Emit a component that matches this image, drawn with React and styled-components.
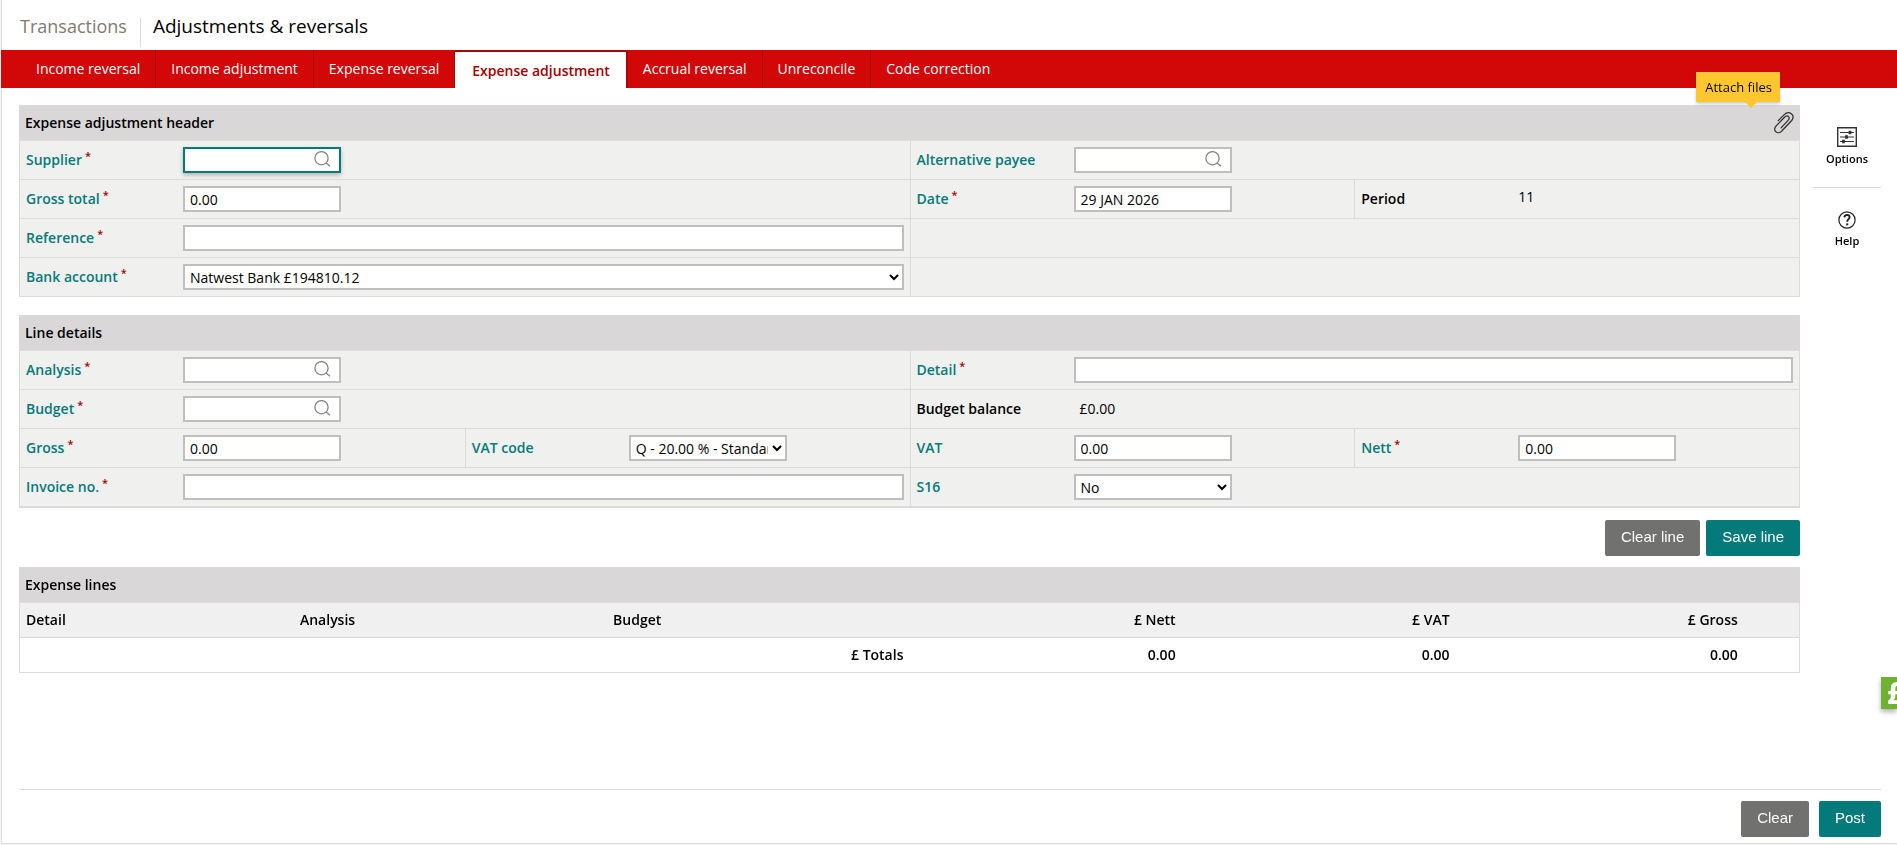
import React, { useId } from "react";
import styled, { createGlobalStyle, css } from "styled-components";

const color = {
  red: "#d20808",
  darkRed: "#a90606",
  teal: "#057a7b",
  grey: "#71716f",
  bar: "#d9d7d8",
  row: "#f0f0ee",
  line: "#dbdbdb",
  field: "#bfbfbf",
};

const GlobalStyle = createGlobalStyle`
  *, *::before, *::after { box-sizing: border-box; }
  body {
    margin: 0;
    background: #f7f7f7;
    color: #000;
    font: 14px/20px "Open Sans", "Noto Sans", sans-serif;
  }
  button, input, select { font: inherit; color: inherit; }
`;

const Page = styled.div`
  display: flex;
  flex-direction: column;
  min-height: calc(100vh - 1px);
  margin-left: 1px;
  background: #fff;
  border-left: 1px solid ${color.line};
  border-bottom: 1px solid ${color.line};
`;

const TitleBar = styled.header`
  display: flex;
  align-items: flex-end;
  height: 50px;
  padding: 0 18px 3px;
`;

const Section = styled.span`
  height: 29px;
  padding-right: 13px;
  border-right: 1px solid ${color.line};
  color: #85796f;
  font-size: 18px;
  line-height: 16px;
`;

const Title = styled.h1`
  height: 29px;
  margin: 0;
  padding-left: 12px;
  font-size: 19px;
  font-weight: 400;
  line-height: 16px;
`;

const TabBar = styled.nav`
  display: flex;
  height: 38px;
  margin-left: -1px;
  padding-left: 20px;
  background: ${color.red};
`;

const Tab = styled.a`
  padding: 0 15px;
  border-right: 1px solid ${color.darkRed};
  color: #fff;
  line-height: 37px;
  text-decoration: none;
  white-space: nowrap;

  &:last-child { border-right: 0; }

  ${(p) =>
    p.$active &&
    css`
      padding: 0 17px;
      border-top: 2px solid ${color.darkRed};
      background: #fff;
      color: #a30000;
      font-weight: 600;
      box-shadow: inset -1px 0 0 ${color.darkRed};
    `}
`;

const Body = styled.div`
  display: grid;
  grid-template-columns: minmax(0, 1fr) 68px;
  gap: 13px;
  flex: 1;
  padding: 17px 16px 0 17px;
`;

const Main = styled.main`
  display: flex;
  flex-direction: column;
`;

const Panel = styled.section`
  margin-bottom: ${(p) => p.$after || 0}px;
  border-bottom: ${(p) => (p.$ruled ? 1 : 0)}px solid ${color.line};
`;

const PanelBar = styled.div`
  display: flex;
  align-items: center;
  justify-content: space-between;
  height: 36px;
  padding: 0 6px;
  background: ${color.bar};
  border-bottom: 1px solid #dedcdc;
`;

const PanelTitle = styled.h2`
  margin: 0;
  font-size: 14px;
  font-weight: 600;
`;

const Row = styled.div`
  display: grid;
  grid-template-columns: repeat(4, minmax(0, 1fr));
  height: 39px;
  background: ${color.row};
  border: solid ${color.line};
  border-width: 0 1px 1px;
`;

const Cell = styled.div`
  grid-column: span ${(p) => p.$span || 1};
  display: flex;
  align-items: center;
  padding: 0 6px;

  & + & { border-left: 1px solid ${color.line}; }
`;

const Label = styled.label`
  flex: 0 0 157px;
  color: ${(p) => (p.$plain ? "#000" : color.teal)};
  font-weight: 600;
  white-space: nowrap;
`;

const Required = styled.span`
  margin-left: 3px;
  color: #a90000;
  font-size: 11px;
  vertical-align: 5px;
  line-height: 10px;
`;

const fieldBox = css`
  flex: ${(p) => (p.$wide ? "1 1 0" : "0 0 158px")};
  width: ${(p) => (p.$wide ? "auto" : "158px")};
  min-width: 0;
  height: 26px;
  background: #fff;
  border: 2px solid ${color.field};
  border-radius: 0;
`;

const Input = styled.input`
  ${fieldBox}
  padding: 0 5px;
  outline: none;
`;

const Select = styled.select`
  ${fieldBox}
  padding: 0 1px;
`;

const SearchBox = styled.div`
  ${fieldBox}
  display: flex;
  align-items: center;

  &:focus-within {
    border-color: ${color.teal};
    box-shadow: 0 2px 4px rgba(0, 0, 0, 0.25);
  }
`;

const SearchInput = styled.input`
  flex: 1;
  min-width: 0;
  height: 22px;
  padding: 0 5px;
  border: 0;
  outline: none;
  background: none;
`;

const IconButton = styled.button`
  display: flex;
  padding: 0;
  border: 0;
  background: none;
`;

const SearchButton = styled(IconButton)`
  padding: 0 8px 3px 0;
`;

const Value = styled.output`
  padding-left: ${(p) => (p.$indent ? 6 : 0)}px;
  padding-bottom: ${(p) => (p.$raised ? 4 : 0)}px;
`;

const AttachSlot = styled.div`
  position: relative;
`;

const Tooltip = styled.div`
  position: absolute;
  right: 14px;
  bottom: 32px;
  padding: 0 8px 0 9px;
  background: #ffc72f;
  box-shadow: 0 2px 3px rgba(0, 0, 0, 0.2);
  font-size: 13px;
  line-height: 30px;
  white-space: nowrap;

  &::after {
    content: "";
    position: absolute;
    top: 100%;
    right: 23px;
    border: 6px solid transparent;
    border-top-color: #ffc72f;
    border-bottom: 0;
  }
`;

const Buttons = styled.div`
  display: flex;
  justify-content: flex-end;
  gap: ${(p) => p.$gap}px;
  margin-bottom: ${(p) => p.$after || 0}px;
`;

const Button = styled.button`
  height: 36px;
  padding: 0 16px 2px;
  border: 0;
  border-radius: 2px;
  background: ${(p) => (p.$primary ? color.teal : color.grey)};
  color: #fff;
  font-family: "Liberation Sans", Arial, sans-serif;
  font-size: 15px;
`;

const Table = styled.table`
  width: 100%;
  table-layout: fixed;
  border-collapse: separate;
  border-spacing: 0;
  border: solid ${color.line};
  border-width: 0 1px;
`;

const Col = styled.col`
  width: ${(p) => p.$w}%;
`;

const Th = styled.th`
  height: 35px;
  padding: 0 6px;
  border-bottom: 1px solid ${color.line};
  background: ${(p) => (p.$total ? "#fff" : "#f0f0f0")};
  font-weight: 600;
  text-align: ${(p) => (p.$right ? "right" : "left")};
`;

const Rail = styled.aside`
  display: flex;
  flex-direction: column;
`;

const RailButton = styled.button`
  display: flex;
  flex-direction: column;
  align-items: center;
  padding: 22px 0 16px;
  border: 0;
  background: none;
  font-size: 11px;
  font-weight: 600;
  line-height: 24px;

  & + & {
    padding-top: 23px;
    border-top: 1px solid ${color.line};
  }
`;

const Footer = styled.footer`
  margin: 0 16px 6px 17px;
  padding-top: 11px;
  border-top: 1px solid ${color.line};
`;

const CurrencyTab = styled.button`
  position: fixed;
  right: 0;
  bottom: 136px;
  width: 16px;
  height: 32px;
  padding: 0 0 0 6px;
  overflow: hidden;
  border: 0;
  background: #70b032;
  box-shadow: 0 3px 5px rgba(0, 0, 0, 0.3);
  color: #fff;
  font-size: 30px;
  font-weight: 700;
  line-height: 32px;
  text-align: left;
`;

const SearchIcon = () => (
  <svg width="17" height="16" viewBox="0 0 17 16" fill="none" stroke="#858585" strokeWidth="1.3">
    <circle cx="7.5" cy="7.2" r="6.6" />
    <path d="M12 12l4 3.2" />
  </svg>
);

const ClipIcon = () => (
  <svg width="20" height="22" viewBox="0 0 20 22" fill="none" stroke="#333" strokeWidth="1.3" strokeLinecap="round">
    <path d="M4.2 8.6l6.1-6c2-2 4.9-2.3 7-.9 2.3 1.6 2.3 4.5.4 6.8L8 18.8c-1.6 1.9-4.3 2.5-6.1 1-1.7-1.5-1.5-3.9.1-5.7l8.5-8.9c1.2-1.3 2.8-1.6 3.9-.7 1.1.9 1 2.3-.1 3.6l-7.2 7.8" />
  </svg>
);

const OptionsIcon = () => (
  <svg width="20" height="20" viewBox="0 0 20 20" fill="none" stroke="#333">
    <path d="M.7.7h18.6v18.6H.7z" strokeWidth="1.4" />
    <path d="M3 5.500h14M3 10h14M3 14.500h14" strokeWidth="1.2" />
    <path d="M13 3.800v3.400M9.500 8.300v3.400M6.500 12.800v3.400" strokeWidth="2.8" />
  </svg>
);

const HelpIcon = () => (
  <svg width="18" height="18" viewBox="0 0 18 18" fill="none" stroke="#222">
    <circle cx="9" cy="9" r="8.1" strokeWidth="1.2" />
    <path d="M6.4 6.3C6.6 4.5 7.8 4 9.1 4c1.5 0 2.5.9 2.5 2.2 0 1.9-2.4 2-2.4 4.5" strokeWidth="1.9" />
    <path d="M9.200 12.400v2" strokeWidth="2" />
  </svg>
);

function Field({ label, required, span, kind = "text", value = "", options, wide, focused }) {
  const id = useId();
  const controls = {
    text: () => <Input id={id} type="text" defaultValue={value} $wide={wide} />,
    select: () => (
      <Select id={id} $wide={wide}>
        {options.map((o) => (
          <option key={o}>{o}</option>
        ))}
      </Select>
    ),
    search: () => (
      <SearchBox>
        <SearchInput id={id} type="text" autoFocus={focused} />
        <SearchButton type="button" aria-label={`Search ${label}`}>
          <SearchIcon />
        </SearchButton>
      </SearchBox>
    ),
    value: () => <Value id={id} $indent>{value}</Value>,
    raisedValue: () => <Value id={id} $raised>{value}</Value>,
  };
  return (
    <Cell $span={span}>
      <Label htmlFor={id} $plain={kind === "value" || kind === "raisedValue"}>
        {label}
        {required && <Required>*</Required>}
      </Label>
      {controls[kind]()}
    </Cell>
  );
}

const tabs = [
  "Income reversal",
  "Income adjustment",
  "Expense reversal",
  "Expense adjustment",
  "Accrual reversal",
  "Unreconcile",
  "Code correction",
];

export default function App() {
  return (
    <>
      <GlobalStyle />
      <Page>
        <TitleBar>
          <Section>Transactions</Section>
          <Title>Adjustments &amp; reversals</Title>
        </TitleBar>
        <TabBar>
          {tabs.map((t) => (
            <Tab key={t} href="#" $active={t === "Expense adjustment"}>
              {t}
            </Tab>
          ))}
        </TabBar>
        <Body>
          <Main>
            <Panel $after={18}>
              <PanelBar>
                <PanelTitle>Expense adjustment header</PanelTitle>
                <AttachSlot>
                  <IconButton type="button" aria-label="Attach files">
                    <ClipIcon />
                  </IconButton>
                  <Tooltip role="tooltip">Attach files</Tooltip>
                </AttachSlot>
              </PanelBar>
              <Row>
                <Field label="Supplier" required span={2} kind="search" focused />
                <Field label="Alternative payee" span={2} kind="search" />
              </Row>
              <Row>
                <Field label="Gross total" required span={2} value="0.00" />
                <Field label="Date" required value="29 JAN 2026" />
                <Field label="Period" kind="raisedValue" value="11" />
              </Row>
              <Row>
                <Field label="Reference" required span={2} wide />
                <Cell $span={2} />
              </Row>
              <Row>
                <Field label="Bank account" required span={2} wide kind="select" options={["Natwest Bank £194810.12"]} />
                <Cell $span={2} />
              </Row>
            </Panel>

            <Panel $after={12} $ruled>
              <PanelBar>
                <PanelTitle>Line details</PanelTitle>
              </PanelBar>
              <Row>
                <Field label="Analysis" required span={2} kind="search" />
                <Field label="Detail" required span={2} wide />
              </Row>
              <Row>
                <Field label="Budget" required span={2} kind="search" />
                <Field label="Budget balance" span={2} kind="value" value="£0.00" />
              </Row>
              <Row>
                <Field label="Gross" required value="0.00" />
                <Field label="VAT code" kind="select" options={["Q - 20.00 % - Standard"]} />
                <Field label="VAT" value="0.00" />
                <Field label="Nett" required value="0.00" />
              </Row>
              <Row>
                <Field label="Invoice no." required span={2} wide />
                <Field label="S16" span={2} kind="select" options={["No", "Yes"]} />
              </Row>
            </Panel>

            <Buttons $gap={6} $after={11}>
              <Button type="button">Clear line</Button>
              <Button type="button" $primary>Save line</Button>
            </Buttons>

            <Panel>
              <PanelBar>
                <PanelTitle>Expense lines</PanelTitle>
              </PanelBar>
              <Table>
                <colgroup>
                  {[15.4, 17.6, 17, 15.3, 15.4, 16.2, 3.1].map((w, i) => (
                    <Col key={i} $w={w} />
                  ))}
                </colgroup>
                <thead>
                  <tr>
                    <Th>Detail</Th>
                    <Th>Analysis</Th>
                    <Th>Budget</Th>
                    <Th $right>£ Nett</Th>
                    <Th $right>£ VAT</Th>
                    <Th $right>£ Gross</Th>
                    <Th />
                  </tr>
                </thead>
                <tbody>
                  <tr>
                    <Th scope="row" colSpan={3} $right $total>£ Totals</Th>
                    <Th as="td" $right $total>0.00</Th>
                    <Th as="td" $right $total>0.00</Th>
                    <Th as="td" $right $total>0.00</Th>
                    <Th as="td" $total />
                  </tr>
                </tbody>
              </Table>
            </Panel>
          </Main>
          <Rail>
            <RailButton type="button">
              <OptionsIcon />
              Options
            </RailButton>
            <RailButton type="button">
              <HelpIcon />
              Help
            </RailButton>
          </Rail>
        </Body>
        <Footer>
          <Buttons $gap={10}>
            <Button type="button">Clear</Button>
            <Button type="button" $primary>Post</Button>
          </Buttons>
        </Footer>
        <CurrencyTab type="button">£</CurrencyTab>
      </Page>
    </>
  );
}
